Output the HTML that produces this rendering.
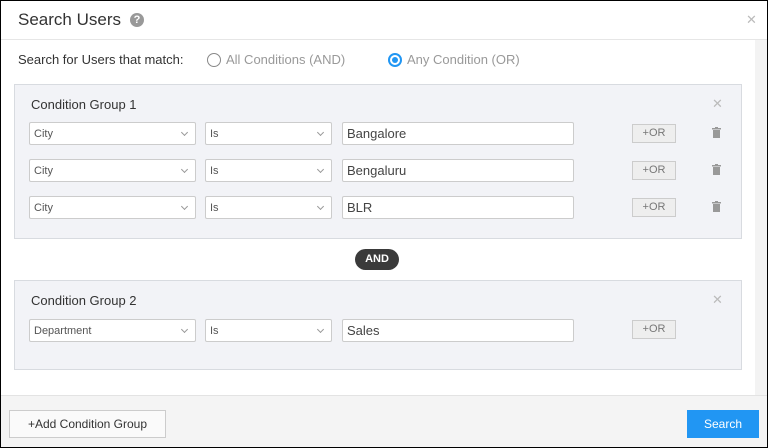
<!DOCTYPE html><html><head><style>
*{box-sizing:border-box;margin:0;padding:0}
body{width:768px;height:448px;background:#000;font-family:"Liberation Sans",sans-serif;position:relative;overflow:hidden}
.win{position:absolute;left:1px;top:1px;width:766px;height:446px;background:#fff}
.a{position:absolute}
.grp{position:absolute;left:13px;width:728px;background:#f2f3f7;border:1px solid #d8dbe0}
.sel,.inp{position:absolute;height:23px;background:#fff;border:1px solid #ccc;border-radius:2px;font-size:11px;color:#555;padding:5px 4px}
.inp{font-size:13px;padding:3px 4px;color:#444}
.sel:after{content:"";position:absolute;right:8px;top:7px;width:4px;height:4px;border-right:1px solid #999;border-bottom:1px solid #999;transform:rotate(45deg)}
.or{position:absolute;width:44px;height:19px;border:1px solid #ccc;background:#eee;font-size:11px;color:#777;text-align:center;line-height:17px}
.x{position:absolute;color:#bbb;font-size:13px}
.tr{position:absolute;width:9px;height:11px}
</style></head><body><div class="win">
<div class="a" style="left:17px;top:9px;font-size:17px;color:#333">Search Users</div>
<div class="a" style="left:129px;top:12px;width:14px;height:14px;border-radius:50%;background:#999;color:#fff;font-size:11px;font-weight:bold;text-align:center;line-height:14px">?</div>
<div class="a" style="left:745px;top:11px;color:#bbb;font-size:13px">✕</div>
<div class="a" style="left:0;top:38px;width:766px;height:1px;background:#e6e6e6"></div>
<div class="a" style="left:754px;top:39px;width:12px;height:356px;background:#f3f3f3"></div>
<div class="a" style="left:17px;top:51px;font-size:13px;color:#333">Search for Users that match:</div>
<div class="a" style="left:206px;top:52px;width:14px;height:14px;border-radius:50%;border:1px solid #888"></div>
<div class="a" style="left:225px;top:51px;font-size:13px;color:#999">All Conditions (AND)</div>
<div class="a" style="left:387px;top:52px;width:14px;height:14px;border-radius:50%;border:2px solid #2196f3"><div style="margin:2px;width:6px;height:6px;border-radius:50%;background:#2196f3"></div></div>
<div class="a" style="left:406px;top:51px;font-size:13px;color:#999">Any Condition (OR)</div>

<div class="grp" style="top:83px;height:155px">
<div class="a" style="left:16px;top:12px;font-size:13px;color:#333">Condition Group 1</div>
<div class="x" style="left:697px;top:11px">✕</div>
<div class="sel" style="left:14px;top:37px;width:167px">City</div><div class="sel" style="left:190px;top:37px;width:127px">Is</div><div class="inp" style="left:327px;top:37px;width:232px">Bangalore</div><div class="or" style="left:617px;top:39px">+OR</div>
<div class="sel" style="left:14px;top:74px;width:167px">City</div><div class="sel" style="left:190px;top:74px;width:127px">Is</div><div class="inp" style="left:327px;top:74px;width:232px">Bengaluru</div><div class="or" style="left:617px;top:76px">+OR</div>
<div class="sel" style="left:14px;top:111px;width:167px">City</div><div class="sel" style="left:190px;top:111px;width:127px">Is</div><div class="inp" style="left:327px;top:111px;width:232px">BLR</div><div class="or" style="left:617px;top:113px">+OR</div>
<svg class="tr" style="left:697px;top:42px" viewBox="0 0 9 11"><rect x="0" y="1" width="9" height="1.5" fill="#999"/><rect x="3" y="0" width="3" height="1" fill="#999"/><rect x="1" y="3" width="7" height="8" fill="#999"/></svg>
<svg class="tr" style="left:697px;top:79px" viewBox="0 0 9 11"><rect x="0" y="1" width="9" height="1.5" fill="#999"/><rect x="3" y="0" width="3" height="1" fill="#999"/><rect x="1" y="3" width="7" height="8" fill="#999"/></svg>
<svg class="tr" style="left:697px;top:116px" viewBox="0 0 9 11"><rect x="0" y="1" width="9" height="1.5" fill="#999"/><rect x="3" y="0" width="3" height="1" fill="#999"/><rect x="1" y="3" width="7" height="8" fill="#999"/></svg>
</div>
<div class="a" style="left:354px;top:248px;width:44px;height:21px;border-radius:11px;background:#3a3a3a;color:#fff;font-size:11px;font-weight:bold;text-align:center;line-height:21px">AND</div>
<div class="grp" style="top:279px;height:90px">
<div class="a" style="left:16px;top:12px;font-size:13px;color:#333">Condition Group 2</div>
<div class="x" style="left:697px;top:11px">✕</div>
<div class="sel" style="left:14px;top:38px;width:167px">Department</div><div class="sel" style="left:190px;top:38px;width:127px">Is</div><div class="inp" style="left:327px;top:38px;width:232px">Sales</div><div class="or" style="left:617px;top:39px">+OR</div>
</div>
<div class="a" style="left:0;top:394px;width:766px;height:52px;background:#f4f4f4;border-top:1px solid #e3e3e3"></div>
<div class="a" style="left:8px;top:409px;width:157px;height:28px;background:#fafafa;border:1px solid #ccc;font-size:12px;color:#333;text-align:center;line-height:26px">+Add Condition Group</div>
<div class="a" style="left:686px;top:409px;width:72px;height:28px;background:#2196f3;color:#fff;font-size:12px;text-align:center;line-height:28px">Search</div>
</div></body></html>
